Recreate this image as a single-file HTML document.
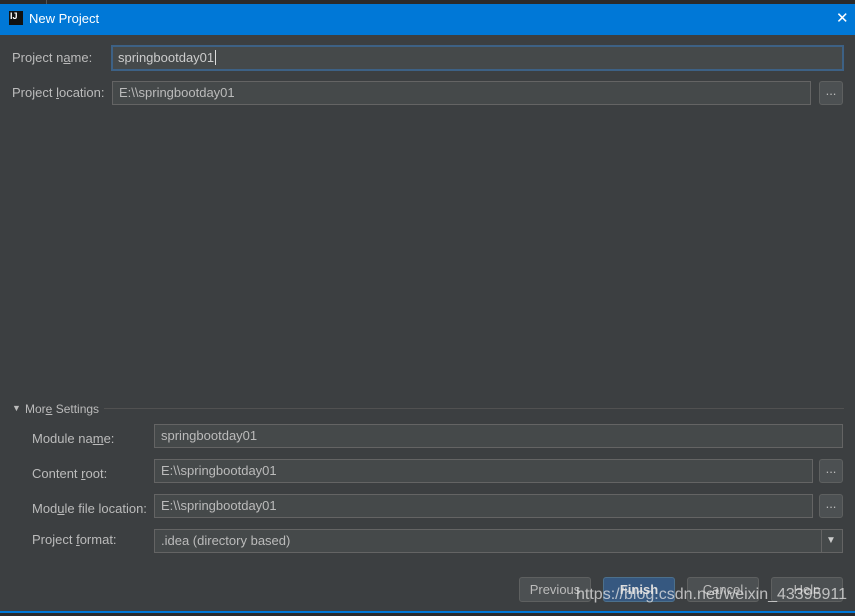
<!DOCTYPE html><html><head><style>
body{margin:0;width:855px;height:616px;background:#3c3f41;position:relative;overflow:hidden;font-family:"Liberation Sans","Noto Sans CJK SC",sans-serif;font-size:13px;color:#bbbbbb}
.a{position:absolute}
.f{position:absolute;background:#45494a;border:1px solid #646464;box-sizing:border-box;height:24px;line-height:22px;padding-left:6px;color:#bbbbbb}
.b{position:absolute;background:#4c5052;border:1px solid #5e6060;box-sizing:border-box;width:24px;height:24px;border-radius:3px;text-align:center;line-height:18px;color:#bbb}
.btn{position:absolute;top:577px;height:25px;width:72px;box-sizing:border-box;border:1px solid #5e6060;background:#4c5052;border-radius:3px;text-align:center;line-height:23px;color:#bbb}
u{text-decoration:underline}
</style></head><body>
<div class="a" style="left:0;top:0;width:855px;height:4px;background:#2b2b2b"></div>
<div class="a" style="left:46px;top:0;width:1px;height:4px;background:#555"></div>
<div class="a" style="left:0;top:4px;width:855px;height:31px;background:#0078d7"></div>
<div class="a" style="left:9px;top:11px;width:14px;height:14px;background:#111;color:#fff;font-size:9px;font-weight:bold;line-height:10px;padding-left:1px;box-sizing:border-box">IJ</div>
<div class="a" style="left:29px;top:11px;color:#fff;font-size:13px">New Project</div>
<div class="a" style="left:836px;top:9px;color:#fff;font-size:15px">✕</div>
<div class="a" style="left:12px;top:50px">Project n<u>a</u>me:</div>
<div class="f" style="left:111px;top:45px;width:733px;height:26px;border:2px solid #3d6185;padding-left:5px;color:#ccc">springbootday01<span style="border-left:1px solid #ddd;margin-left:1px"></span></div>
<div class="a" style="left:12px;top:85px">Project <u>l</u>ocation:</div>
<div class="f" style="left:112px;top:81px;width:699px">E:\\springbootday01</div>
<div class="b" style="left:819px;top:81px">...</div>
<div class="a" style="left:12px;top:403px;font-size:9px">▼</div>
<div class="a" style="left:25px;top:402px;font-size:12px">Mor<u>e</u> Settings</div>
<div class="a" style="left:104px;top:408px;width:740px;height:1px;background:#515151"></div>
<div class="a" style="left:32px;top:431px">Module na<u>m</u>e:</div>
<div class="f" style="left:154px;top:424px;width:689px">springbootday01</div>
<div class="a" style="left:32px;top:466px">Content <u>r</u>oot:</div>
<div class="f" style="left:154px;top:459px;width:659px">E:\\springbootday01</div>
<div class="b" style="left:819px;top:459px">...</div>
<div class="a" style="left:32px;top:501px">Mod<u>u</u>le file location:</div>
<div class="f" style="left:154px;top:494px;width:659px">E:\\springbootday01</div>
<div class="b" style="left:819px;top:494px">...</div>
<div class="a" style="left:32px;top:532px">Project <u>f</u>ormat:</div>
<div class="f" style="left:154px;top:529px;width:689px">.idea (directory based)</div>
<div class="a" style="left:821px;top:530px;width:1px;height:22px;background:#646464"></div>
<div class="a" style="left:826px;top:535px;font-size:10px;color:#ccc">▼</div>
<div class="btn" style="left:519px">Previous</div>
<div class="btn" style="left:603px;background:#365880;border-color:#4c708c;font-weight:bold;color:#ddd">Finish</div>
<div class="btn" style="left:687px">Cancel</div>
<div class="btn" style="left:771px">Help</div>
<div class="a" style="left:576px;top:586px;font-size:16px;color:rgba(230,230,230,0.75)">https://blog.csdn.net/weixin_43395911</div>
<div class="a" style="left:0;top:611px;width:855px;height:2px;background:#0078d7"></div>
<div class="a" style="left:0;top:613px;width:855px;height:3px;background:#2b2b2b"></div>
</body></html>
